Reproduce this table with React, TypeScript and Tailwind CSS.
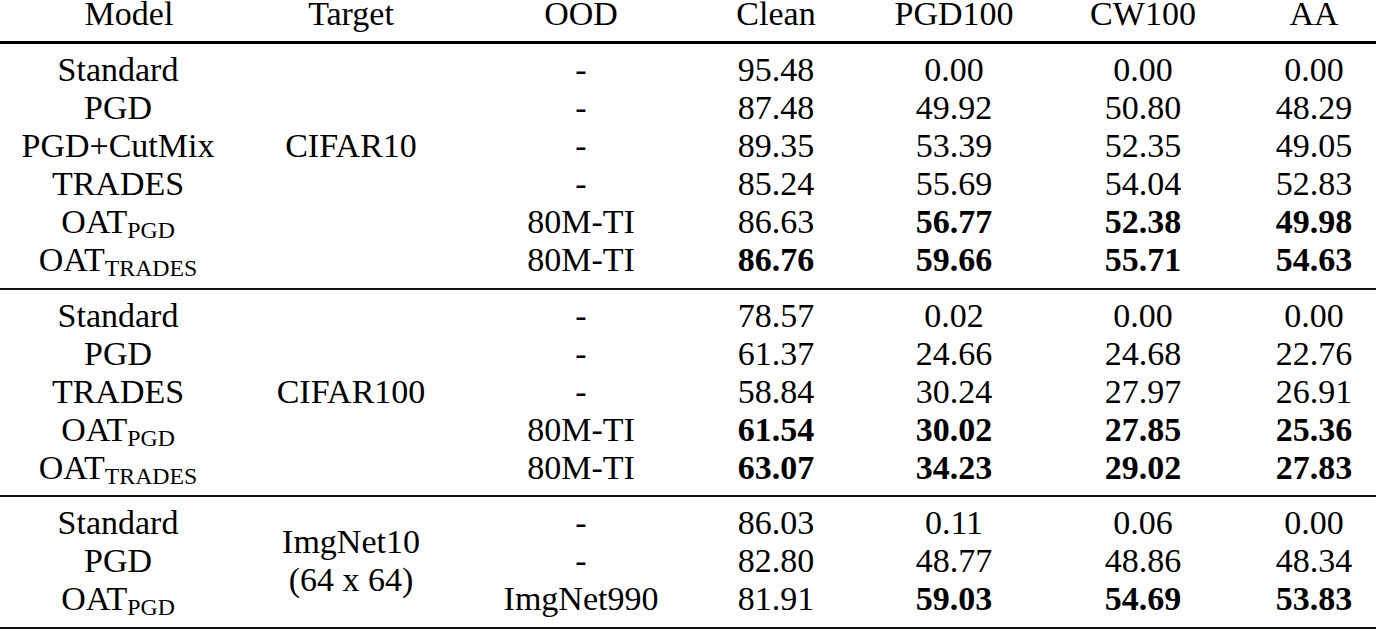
import React from "react";

type Row = {
  model: string;
  sub?: string;
  ood: string;
  vals: string[];
  bold: boolean[];
};

const cols = "grid grid-cols-[236px_230px_230px_160px_196px_182px_142px]";
const cell = "h-[38px] leading-[38px] text-center whitespace-nowrap";

const sections: { target: string[]; targetRow: number; span: boolean; rows: Row[] }[] = [
  {
    target: ["CIFAR10"],
    targetRow: 3,
    span: false,
    rows: [
      { model: "Standard", ood: "-", vals: ["95.48", "0.00", "0.00", "0.00"], bold: [false, false, false, false] },
      { model: "PGD", ood: "-", vals: ["87.48", "49.92", "50.80", "48.29"], bold: [false, false, false, false] },
      { model: "PGD+CutMix", ood: "-", vals: ["89.35", "53.39", "52.35", "49.05"], bold: [false, false, false, false] },
      { model: "TRADES", ood: "-", vals: ["85.24", "55.69", "54.04", "52.83"], bold: [false, false, false, false] },
      { model: "OAT", sub: "PGD", ood: "80M-TI", vals: ["86.63", "56.77", "52.38", "49.98"], bold: [false, true, true, true] },
      { model: "OAT", sub: "TRADES", ood: "80M-TI", vals: ["86.76", "59.66", "55.71", "54.63"], bold: [true, true, true, true] },
    ],
  },
  {
    target: ["CIFAR100"],
    targetRow: 3,
    span: false,
    rows: [
      { model: "Standard", ood: "-", vals: ["78.57", "0.02", "0.00", "0.00"], bold: [false, false, false, false] },
      { model: "PGD", ood: "-", vals: ["61.37", "24.66", "24.68", "22.76"], bold: [false, false, false, false] },
      { model: "TRADES", ood: "-", vals: ["58.84", "30.24", "27.97", "26.91"], bold: [false, false, false, false] },
      { model: "OAT", sub: "PGD", ood: "80M-TI", vals: ["61.54", "30.02", "27.85", "25.36"], bold: [true, true, true, true] },
      { model: "OAT", sub: "TRADES", ood: "80M-TI", vals: ["63.07", "34.23", "29.02", "27.83"], bold: [true, true, true, true] },
    ],
  },
  {
    target: ["ImgNet10", "(64 x 64)"],
    targetRow: 1,
    span: true,
    rows: [
      { model: "Standard", ood: "-", vals: ["86.03", "0.11", "0.06", "0.00"], bold: [false, false, false, false] },
      { model: "PGD", ood: "-", vals: ["82.80", "48.77", "48.86", "48.34"], bold: [false, false, false, false] },
      { model: "OAT", sub: "PGD", ood: "ImgNet990", vals: ["81.91", "59.03", "54.69", "53.83"], bold: [false, true, true, true] },
    ],
  },
];

const headers = ["Model", "Target", "OOD", "Clean", "PGD100", "CW100", "AA"];

const Section = ({ s, pad }: { s: (typeof sections)[number]; pad: string }) => (
  <div className={`${cols} ${pad}`}>
    {s.rows.map((r, i) => (
      <React.Fragment key={i}>
        <div className={cell} style={{ gridRow: i + 1, gridColumn: 1 }}>
          {r.model}
          {r.sub && <sub className="text-[0.7em] -bottom-[0.2em]">{r.sub}</sub>}
        </div>
        <div className={cell} style={{ gridRow: i + 1, gridColumn: 3 }}>
          {r.ood}
        </div>
        {r.vals.map((v, j) => (
          <div
            key={j}
            className={`${cell} ${r.bold[j] ? "font-bold" : ""} ${j === 3 ? "pl-[18px]" : ""}`}
            style={{ gridRow: i + 1, gridColumn: 4 + j }}
          >
            {v}
          </div>
        ))}
      </React.Fragment>
    ))}
    {s.span ? (
      <div
        className="flex flex-col justify-center items-center leading-[38px]"
        style={{ gridRow: `1 / span ${s.rows.length}`, gridColumn: 2 }}
      >
        {s.target.map((t) => (
          <div key={t}>{t}</div>
        ))}
      </div>
    ) : (
      <div className={cell} style={{ gridRow: s.targetRow, gridColumn: 2 }}>
        {s.target[0]}
      </div>
    )}
  </div>
);

export default function App() {
  return (
    <div className="w-[1376px] h-[631px] bg-white text-black text-[34px] font-['Liberation_Serif',serif] overflow-hidden">
      <div className={`${cols} h-[41px]`}>
        {headers.map((h, i) => (
          <div
            key={h}
            className={`text-center leading-[28px] ${i === 0 ? "pl-[22px]" : ""} ${i === 6 ? "pl-[18px]" : ""}`}
          >
            {h}
          </div>
        ))}
      </div>
      <div className="h-[3px] bg-black" />
      <Section s={sections[0]} pad="pt-[7px] pb-[9px]" />
      <div className="h-[2px] bg-[#111]" />
      <Section s={sections[1]} pad="pt-[7px] pb-[8px]" />
      <div className="h-[2px] bg-[#111]" />
      <Section s={sections[2]} pad="pt-[7px] pb-[9px]" />
      <div className="h-[2px] bg-[#111]" />
    </div>
  );
}
